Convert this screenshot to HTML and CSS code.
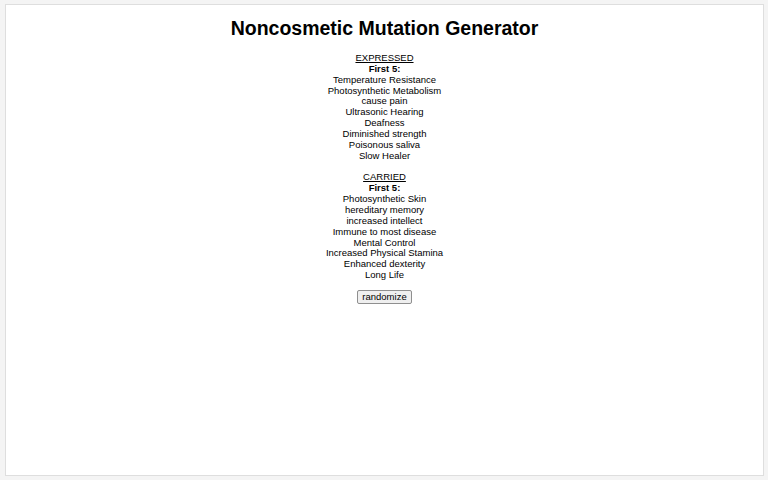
FILE: index.html
```html
<!DOCTYPE html>
<html>
<head>
<meta charset="utf-8">
<link rel="stylesheet" href="styles.css">
</head>
<body>
<div class="card">
  <h1 class="title">Noncosmetic Mutation Generator</h1>
  <div class="section">
    <div class="heading">EXPRESSED</div>
    <div class="sub">First 5:</div>
    <div>Temperature Resistance</div>
    <div>Photosynthetic Metabolism</div>
    <div>cause pain</div>
    <div>Ultrasonic Hearing</div>
    <div>Deafness</div>
    <div>Diminished strength</div>
    <div>Poisonous saliva</div>
    <div>Slow Healer</div>
  </div>
  <div class="section">
    <div class="heading">CARRIED</div>
    <div class="sub">First 5:</div>
    <div>Photosynthetic Skin</div>
    <div>hereditary memory</div>
    <div>increased intellect</div>
    <div>Immune to most disease</div>
    <div>Mental Control</div>
    <div>Increased Physical Stamina</div>
    <div>Enhanced dexterity</div>
    <div>Long Life</div>
  </div>
  <button class="btn">randomize</button>
</div>
</body>
</html>
```
FILE: styles.css
```css
html, body {
  margin: 0;
  padding: 0;
  background: #f4f4f4;
}
body {
  padding: 4px 4px 4px 5px;
  height: 480px;
  box-sizing: border-box;
  font-family: "Liberation Sans", Arial, sans-serif;
  color: #000;
}
.card {
  background: #fff;
  border: 1px solid #dedede;
  height: 100%;
  box-sizing: border-box;
  display: flex;
  flex-direction: column;
  align-items: center;
  padding-top: 12px;
}
.title {
  margin: 0 0 14px 0;
  font-size: 19.5px;
  line-height: 22px;
  font-weight: bold;
}
.section {
  font-size: 9.5px;
  line-height: 10.85px;
  text-align: center;
  margin-bottom: 11px;
}
.heading {
  text-decoration: underline;
}
.sub {
  font-weight: bold;
}
.btn {
  font-family: "Liberation Sans", Arial, sans-serif;
  font-size: 9.5px;
  line-height: 11px;
  height: 14px;
  padding: 0 4px;
  margin-top: -2px;
  background: #efefef;
  border: 1px solid #8f8f8f;
  border-radius: 2px;
  color: #000;
}
```
